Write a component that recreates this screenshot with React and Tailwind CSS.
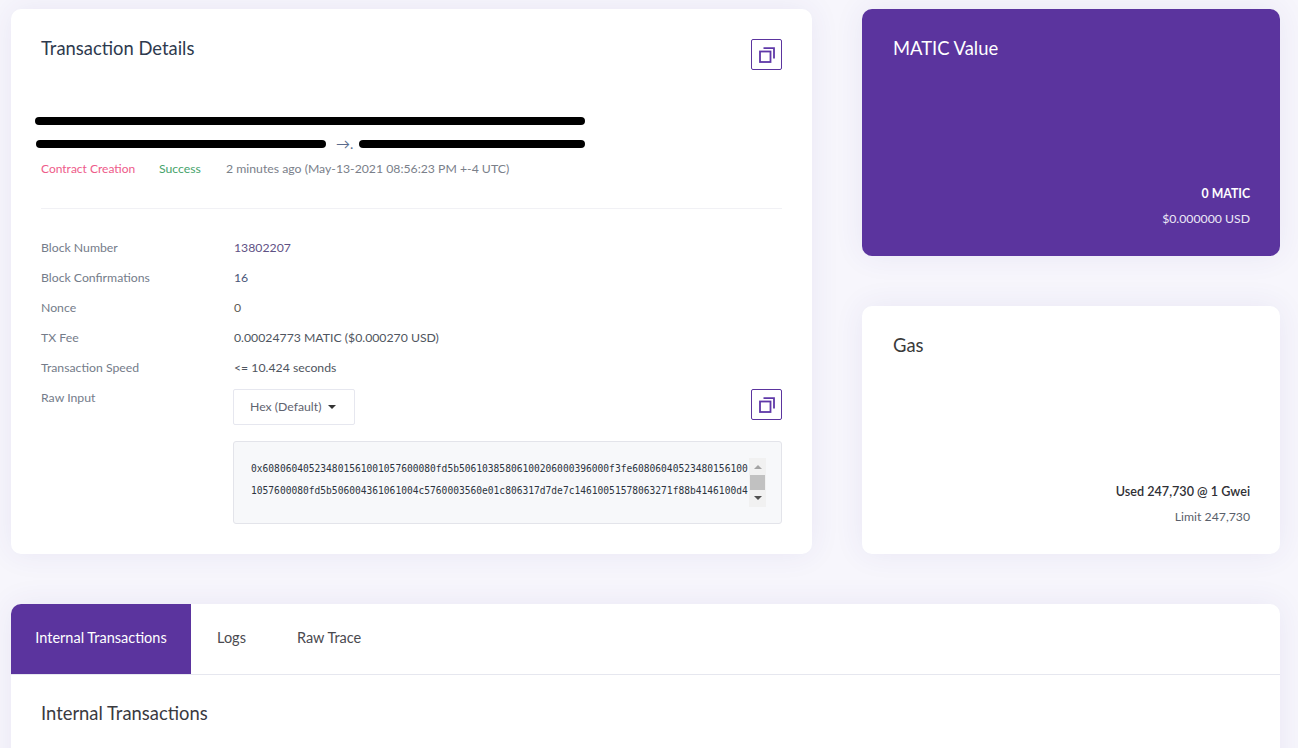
import React from 'react'

const rows = [
    { label: 'Block Number', value: '13802207', color: 'text-[#5f5285]' },
    { label: 'Block Confirmations', value: '16', color: 'text-[#4a5578]' },
    { label: 'Nonce', value: '0', color: 'text-[#5f5a55]' },
    { label: 'TX Fee', value: '0.00024773 MATIC ($0.000270 USD)', color: 'text-[#4f5560]' },
    { label: 'Transaction Speed', value: '<= 10.424 seconds', color: 'text-[#4f5560]' },
]

const line1 = '0x608060405234801561001057600080fd5b50610385806100206000396000f3fe60806040523480156100'
const line2 = '1057600080fd5b506004361061004c5760003560e01c806317d7de7c14610051578063271f88b4146100d4'

function CopyButton() {
    return (
        <button className="flex h-[31px] w-[31px] shrink-0 items-center justify-center rounded-[2px] border border-[#5b349e] bg-white">
            <svg width="16" height="16" viewBox="0 0 16 16" fill="none" stroke="#5f38a8" strokeWidth="1.8">
                <rect x="1" y="4.5" width="10.5" height="10.5" />
                <path d="M4.5 1.2H15V11.5" />
            </svg>
        </button>
    )
}

function Redaction({ className }) {
    return <div className={`rounded-full bg-black ${className}`} />
}

export default function App() {
    return (
        <div className="h-screen overflow-hidden bg-[#f7f6fc] pl-[11px] pr-[18px] pt-[9px] font-['Lato',sans-serif] text-[12.25px]">
            <div className="flex gap-[50px]">
                {/* Transaction card */}
                <div className="h-[545px] w-[801px] shrink-0 rounded-[10px] bg-white px-[30px] pt-[30px] shadow-[0_0_30px_rgba(70,50,150,0.08)]">
                    <div className="flex items-start justify-between">
                        <h2 className="text-[18.4px] leading-[18px] text-[#2e3a4e]">Transaction Details</h2>
                        <CopyButton />
                    </div>

                    <div className="mt-[47px] -ml-[6px] w-[550px]">
                        <Redaction className="h-[8px] w-[550px]" />
                        <div className="mt-[14px] flex items-center">
                            <Redaction className="ml-px h-[8px] w-[290px]" />
                            <span className="ml-[10px] w-[23px] text-[14px] leading-[8px] text-[#5b6b8c]">→.</span>
                            <Redaction className="mt-px h-[8px] w-[226px]" />
                        </div>
                    </div>

                    <div className="mt-[12px] flex h-[18px] items-center">
                        <span className="w-[118px] text-[12px] text-[#ee5b8a]">Contract Creation</span>
                        <span className="w-[67px] text-[#46a36b]">Success</span>
                        <span className="text-[#7a808a]">2 minutes ago (May-13-2021 08:56:23 PM +-4 UTC)</span>
                    </div>

                    <div className="mt-[30px] border-t border-[#f1f1f5]" />

                    <div className="mt-[24px] flex flex-col">
                        {rows.map((row) => (
                            <div key={row.label} className="grid h-[30px] grid-cols-[193px_1fr] leading-[30px]">
                                <span className="text-[#747c8a]">{row.label}</span>
                                <span className={row.color}>{row.value}</span>
                            </div>
                        ))}
                    </div>

                    <div className="grid grid-cols-[192px_1fr]">
                        <span className="leading-[30px] text-[#747c8a]">Raw Input</span>
                        <div className="mt-[6px] flex flex-col">
                            <div className="flex items-start justify-between">
                                <button className="flex h-[36px] w-[122px] items-center rounded-[2px] border border-[#e6e7ef] bg-white pl-[16px] text-[#5f6470]">
                                    Hex (Default)
                                    <span className="ml-[7px] h-0 w-0 border-x-[4px] border-t-[4px] border-x-transparent border-t-[#333]" />
                                </button>
                                <CopyButton />
                            </div>
                            <div className="mt-[16px] flex h-[83px] items-start rounded-[3px] border border-[#e3e4ea] bg-[#f7f8fa] pl-[17px] pt-[16px]">
                                <div className="w-[497px] font-['DejaVu_Sans_Mono',monospace] text-[9.6px] leading-[22px] text-[#2c3440]">
                                    <div className="whitespace-nowrap">{line1}</div>
                                    <div className="whitespace-nowrap">{line2}</div>
                                </div>
                                <div className="ml-[1px] flex h-[49px] w-[17px] flex-col items-center bg-[#f1f1f1]">
                                    <span className="mt-[7px] h-0 w-0 border-x-[4px] border-b-[4px] border-x-transparent border-b-[#a3a3a3]" />
                                    <span className="mt-[6px] h-[15px] w-[15px] bg-[#c1c1c1]" />
                                    <span className="mt-[6px] h-0 w-0 border-x-[4px] border-t-[4px] border-x-transparent border-t-[#505050]" />
                                </div>
                            </div>
                        </div>
                    </div>
                </div>

                {/* Side cards */}
                <div className="flex w-[418px] shrink-0 flex-col gap-[50px]">
                    <div className="flex h-[247px] flex-col rounded-[10px] bg-[#5b349e] pl-[31px] pr-[30px] pt-[30px] text-white shadow-[0_0_30px_rgba(70,50,150,0.08)]">
                        <h2 className="text-[18.4px] leading-[18px]">MATIC Value</h2>
                        <div className="mt-[128px] text-right">
                            <p className="leading-[18px] font-bold">0 MATIC</p>
                            <p className="mt-[7px] leading-[18px] text-[#ece8f6]">$0.000000 USD</p>
                        </div>
                    </div>
                    <div className="flex h-[248px] flex-col rounded-[10px] bg-white pl-[31px] pr-[30px] pt-[30px] shadow-[0_0_30px_rgba(70,50,150,0.08)]">
                        <h2 className="text-[18.4px] leading-[18px] text-[#3a3a3a]">Gas</h2>
                        <div className="mt-[129px] text-right">
                            <p className="text-[12.6px] leading-[18px] font-semibold text-[#2f2f35]">Used 247,730 @ 1 Gwei</p>
                            <p className="mt-[7px] leading-[18px] text-[#5a5f6b]">Limit 247,730</p>
                        </div>
                    </div>
                </div>
            </div>

            {/* Tabs card */}
            <div className="mt-[50px] h-[300px] rounded-[10px] bg-white shadow-[0_0_30px_rgba(70,50,150,0.08)]">
                <div className="flex h-[71px] border-b border-[#e6e7ef] text-[14.5px]">
                    <div className="flex h-[70px] w-[180px] items-center justify-center rounded-tl-[10px] bg-[#5b349e] pb-[3px] text-white">Internal Transactions</div>
                    <div className="flex h-[70px] items-center pb-[3px] pl-[26px] text-[#4a4a4f]">Logs</div>
                    <div className="flex h-[70px] items-center pb-[3px] pl-[51px] text-[#4a4a4f]">Raw Trace</div>
                </div>
                <h2 className="mt-[29px] pl-[30px] text-[18.4px] leading-[18px] text-[#3a3a3f]">Internal Transactions</h2>
            </div>
        </div>
    )
}
